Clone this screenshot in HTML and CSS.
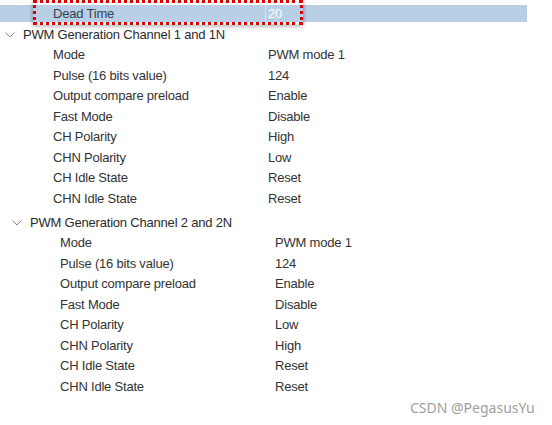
FILE: index.html
```html
<!DOCTYPE html>
<html>
<head>
<meta charset="utf-8">
<link rel="stylesheet" href="styles.css">
</head>
<body>
<div class="tree">
  <div class="row sel">
    <span class="label">Dead Time</span>
    <span class="value">20</span>
    <div class="focus"></div>
  </div>

  <div class="section">
    <div class="head"><svg class="chev" width="10" height="6" viewBox="0 0 10 6"><path d="M0.5 0.5 L5 5 L9.5 0.5" fill="none" stroke="#8a8a8a" stroke-width="1"/></svg><span>PWM Generation Channel 1 and 1N</span></div>
    <div class="row"><span class="label">Mode</span><span class="value">PWM mode 1</span></div>
    <div class="row"><span class="label">Pulse (16 bits value)</span><span class="value">124</span></div>
    <div class="row"><span class="label">Output compare preload</span><span class="value">Enable</span></div>
    <div class="row"><span class="label">Fast Mode</span><span class="value">Disable</span></div>
    <div class="row"><span class="label">CH Polarity</span><span class="value">High</span></div>
    <div class="row"><span class="label">CHN Polarity</span><span class="value">Low</span></div>
    <div class="row"><span class="label">CH Idle State</span><span class="value">Reset</span></div>
    <div class="row"><span class="label">CHN Idle State</span><span class="value">Reset</span></div>
  </div>

  <div class="section second">
    <div class="head"><svg class="chev" width="10" height="6" viewBox="0 0 10 6"><path d="M0.5 0.5 L5 5 L9.5 0.5" fill="none" stroke="#8a8a8a" stroke-width="1"/></svg><span>PWM Generation Channel 2 and 2N</span></div>
    <div class="row"><span class="label">Mode</span><span class="value">PWM mode 1</span></div>
    <div class="row"><span class="label">Pulse (16 bits value)</span><span class="value">124</span></div>
    <div class="row"><span class="label">Output compare preload</span><span class="value">Enable</span></div>
    <div class="row"><span class="label">Fast Mode</span><span class="value">Disable</span></div>
    <div class="row"><span class="label">CH Polarity</span><span class="value">Low</span></div>
    <div class="row"><span class="label">CHN Polarity</span><span class="value">High</span></div>
    <div class="row"><span class="label">CH Idle State</span><span class="value">Reset</span></div>
    <div class="row"><span class="label">CHN Idle State</span><span class="value">Reset</span></div>
  </div>
</div>
<div class="watermark">CSDN @PegasusYu</div>
</body>
</html>
```

FILE: styles.css
```css
html, body {
  margin: 0;
  padding: 0;
  background: #ffffff;
}
body {
  width: 552px;
  height: 425px;
  position: relative;
  overflow: hidden;
  font-family: "Liberation Sans", Arial, sans-serif;
  font-size: 13px;
  letter-spacing: -0.2px;
  color: #333333;
}
.tree {
  padding-top: 5px;
}
.row {
  display: flex;
  align-items: center;
  height: 20.5px;
}
.label {
  box-sizing: border-box;
  width: 268px;
  padding-left: 53px;
  white-space: nowrap;
}
.value {
  white-space: nowrap;
}
.row.sel {
  position: relative;
  height: 17px;
  width: 527px;
  background: #b8cfe6;
  margin-bottom: 2px;
}
.row.sel .label {
  width: 265px;
  color: #37414c;
}
.row.sel .value {
  color: #ffffff;
  border-left: 1px solid #d6e2ee;
  padding-left: 2px;
  height: 17px;
  line-height: 17px;
}
.focus {
  position: absolute;
  left: 33px;
  top: -5px;
  width: 264px;
  height: 19px;
  border: 3px dotted #e00000;
  box-shadow: 0 1px 5px rgba(0, 0, 0, 0.35);
  pointer-events: none;
}
.head {
  display: flex;
  align-items: center;
  height: 20.5px;
  white-space: nowrap;
  color: #2b2b2b;
}
.chev {
  margin-left: 5px;
  margin-right: 8px;
  margin-top: 1px;
}
.section.second {
  margin-left: 7px;
  margin-top: 3.5px;
}
.watermark {
  position: absolute;
  left: 410px;
  top: 398px;
  font-family: "Noto Sans", "Liberation Sans", sans-serif;
  font-size: 14px;
  letter-spacing: 0;
  color: #a0a0a0;
}
```
